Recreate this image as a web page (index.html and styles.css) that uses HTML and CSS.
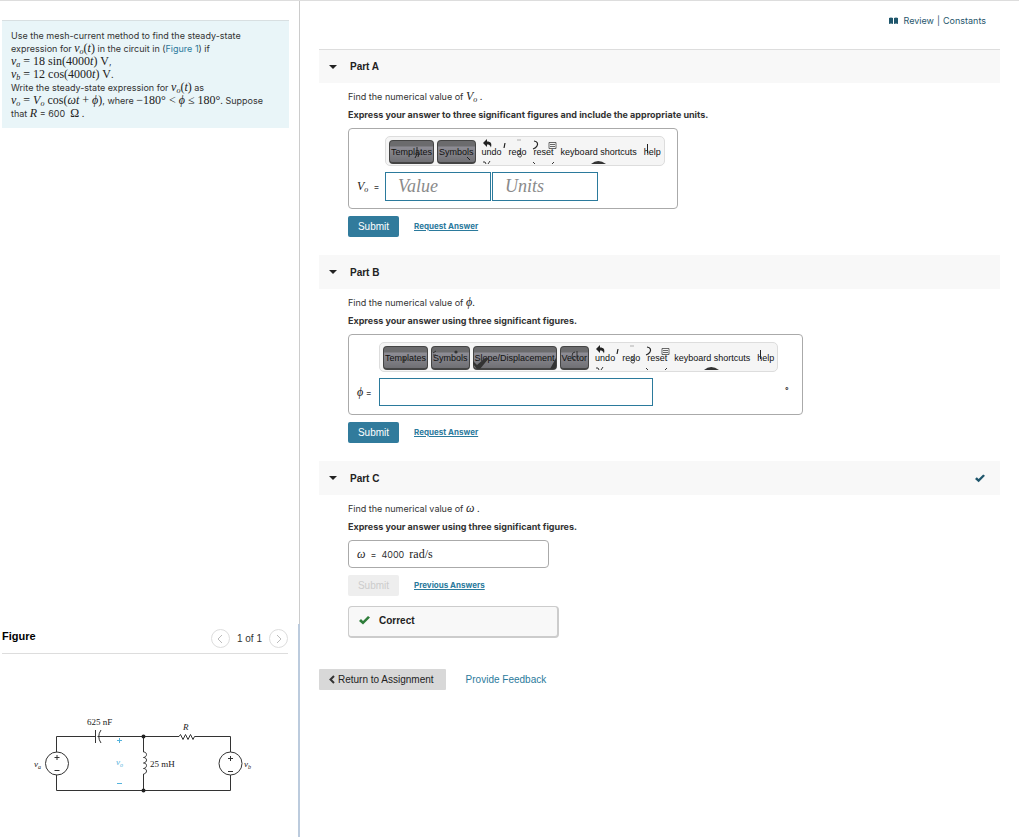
FILE: index.html
```html
<!DOCTYPE html>
<html lang="en">
<head>
<meta charset="utf-8">
<meta name="viewport" content="width=device-width, initial-scale=1">
<title>Mesh-current method</title>
<link rel="stylesheet" href="styles.css">
</head>
<body>
<svg class="defs" aria-hidden="true">
  <symbol id="marks" viewBox="0 0 170 30">
    <path d="M0 6l4-4v2.500c4 0 5 2 4 6-1-2.500-2-3-4-3V10z" fill="#222"/>
    <g fill="none" stroke="#222" stroke-width="1.200">
      <path d="M22 6l-1 5"/>
      <path d="M34 3h4" stroke="#bbb"/>
      <path d="M35 14c3 0 3 2 1 3s-1 3 1 3 2-3 0-3" stroke-width=".8"/>
      <path d="M51 4q5 1 3 5q-1 2-4 3"/>
      <path d="M66 5.500h7v6h-7zM67 7.500h5M67 9.500h5" stroke-width=".8" stroke="#444"/>
      <path d="M0 25l2 0 1 2M5 27l2-3M50 25l2 2M69 27l2-2" stroke-width=".9"/>
      <path d="M164.500 7v9" stroke-width="1"/>
    </g>
    <path d="M108 27q7-6 15 0z" fill="#333"/>
  </symbol>
</svg>
<div class="page">
  <aside class="side">
    <section class="problem">
      Use the mesh-current method to find the steady-state expression for <span class="m"><i>v<sub>o</sub></i>(<i>t</i>)</span> in the circuit in (<a href="#figure">Figure 1</a>) if<br>
      <span class="m"><i>v<sub>a</sub></i> = 18 sin(4000<i>t</i>) V</span>,<br>
      <span class="m"><i>v<sub>b</sub></i> = 12 cos(4000<i>t</i>) V</span>.<br>
      Write the steady-state expression for <span class="m"><i>v<sub>o</sub></i>(<i>t</i>)</span> as<br>
      <span class="m"><i>v<sub>o</sub></i> = <i>V<sub>o</sub></i> cos(<i>ωt</i> + <i>ϕ</i>)</span>, where <span class="m">−180° &lt; <i>ϕ</i> ≤ 180°</span>. Suppose<br>
      that <i class="m">R</i> = 600 &nbsp;<span class="m">Ω</span> .
    </section>
    <section class="figure" id="figure">
      <header class="figure-head">
        <h2>Figure</h2>
        <nav class="pager">
          <button type="button" aria-label="Previous figure"><svg width="6" height="10" viewBox="0 0 6 10"><path d="M5 1L1 5l4 4"/></svg></button>
          <span>1 of 1</span>
          <button type="button" aria-label="Next figure"><svg width="6" height="10" viewBox="0 0 6 10"><path d="M1 1l4 4-4 4"/></svg></button>
        </nav>
      </header>
      <svg class="circuit" width="230" height="100" viewBox="30 705 230 100" role="img" aria-label="Circuit">
        <g fill="none" stroke="#333" stroke-width="1">
          <path d="M56.500 752V736.500H95.500M98.500 736.500H143.500V752M143.500 736.500H179l1.500-2 2.500 5 2.500-5 2.500 5 2.500-5 2.500 5 1.500-3H230.500V752M230.500 775V790.500H56.500V775"/>
          <path d="M95.500 730v13M101 730q-4.500 6.500 0 13M97.500 736.500h3"/>
          <path d="M143.500 752c4 0 4 5 0 5.500c4 0 4 5 0 5.500c4 0 4 5 0 5.500c4 0 4 5 0 5.500V790.500"/>
          <circle cx="57" cy="763.500" r="11.500"/>
          <circle cx="230.500" cy="763.500" r="11.500"/>
          <path d="M54.500 757.500h5M57 755v5M54.500 770.500h5M228 758.500h5M230.500 756v5M228 771.500h5"/>
          <path d="M117 740.500h5M119.500 738v5M117 783.500h5" stroke="#55b3dc"/>
        </g>
        <circle cx="143.500" cy="736.500" r="2"/>
        <circle cx="143.500" cy="790.500" r="2"/>
        <text x="87" y="725">625 nF</text>
        <text x="183" y="730" class="it">R</text>
        <text x="150" y="767">25 mH</text>
        <text x="34" y="767" class="it">v<tspan class="s" dy="2">a</tspan></text>
        <text x="244" y="767" class="it">v<tspan class="s" dy="2">b</tspan></text>
        <text x="116" y="765" class="it blue">v<tspan class="s" dy="2">o</tspan></text>
      </svg>
    </section>
  </aside>

  <main class="main">
    <nav class="tools">
      <svg width="9" height="8" viewBox="0 0 9 8" aria-hidden="true"><path d="M0 1q2-1 4 0v6q-2-1-4 0zM5 1q2-1 4 0v6q-2-1-4 0z" fill="#1f566c"/></svg>
      <a href="#review">Review</a><span>|</span><a href="#constants">Constants</a>
    </nav>

    <section class="part">
      <h2 class="part-head first"><button type="button">Part A</button></h2>
      <div class="part-body">
        <p>Find the numerical value of <i class="m">V<sub>o</sub></i> .</p>
        <p class="ask">Express your answer to three significant figures and include the appropriate units.</p>
        <div class="answer answer-a">
          <div class="toolbar">
            <button type="button" class="key">Templates</button><button type="button" class="key">Symbols</button>
            <div class="plain"><button type="button">undo</button><button type="button">redo</button><button type="button">reset</button><button type="button">keyboard shortcuts</button><button type="button">help</button></div>
            <svg class="overlay" width="280" height="30" aria-hidden="true">
              <use href="#marks" x="97" y="0" width="170" height="30"/>
              <path d="M31 10v7l-2 4M33 16l-1 4M81 20l3 3" fill="none" stroke="#222"/>
            </svg>
          </div>
          <label for="value"><i class="m">V<sub>o</sub></i>&nbsp; =</label>
          <div class="fields"><input id="value" placeholder="Value"><input placeholder="Units" aria-label="Units"></div>
        </div>
        <div class="actions"><button type="button" class="submit">Submit</button><a href="#request-a">Request Answer</a></div>
      </div>
    </section>

    <section class="part">
      <h2 class="part-head"><button type="button">Part B</button></h2>
      <div class="part-body">
        <p>Find the numerical value of <i class="m">ϕ</i>.</p>
        <p class="ask">Express your answer using three significant figures.</p>
        <div class="answer answer-b">
          <div class="toolbar">
            <button type="button" class="key">Templates</button><button type="button" class="key">Symbols</button><button type="button" class="key">Slope/Displacement</button><button type="button" class="key">Vector</button>
            <div class="plain"><button type="button">undo</button><button type="button">redo</button><button type="button">reset</button><button type="button">keyboard shortcuts</button><button type="button">help</button></div>
            <svg class="overlay" width="399" height="30" aria-hidden="true">
              <use href="#marks" x="216" y="0" width="170" height="30"/>
              <path d="M24 13v7M23 17h3M53 10l3-2M53 12h3M195 9q-3 0-3 4t3 4M197 8v8" fill="none" stroke="#333"/>
              <circle cx="76" cy="9" r="1.600" fill="#333"/>
              <path d="M93 18l4 4 8-7 4 0-9 11h-3l-4-5zM170 26l6-11v9q0 2-2 2z" fill="#333"/>
            </svg>
          </div>
          <label for="phi"><i class="m">ϕ</i> =</label>
          <div class="fields"><input id="phi"></div>
          <span class="unit">∘</span>
        </div>
        <div class="actions"><button type="button" class="submit">Submit</button><a href="#request-b">Request Answer</a></div>
      </div>
    </section>

    <section class="part">
      <h2 class="part-head"><button type="button">Part C</button><svg width="10" height="9" viewBox="0 0 11 9" aria-hidden="true"><path d="M0 5l2-2 2 2 5-5 2 1.500-7 7z" fill="#1f566c"/></svg></h2>
      <div class="part-body">
        <p>Find the numerical value of <i class="m">ω</i> .</p>
        <p class="ask">Express your answer using three significant figures.</p>
        <div class="result"><i class="m">ω</i> <span>=</span> <span>4000</span> <span class="m">rad/s</span></div>
        <div class="actions"><button type="button" class="submit" disabled>Submit</button><a href="#previous">Previous Answers</a></div>
        <div class="correct"><svg width="11" height="9" viewBox="0 0 11 9" aria-hidden="true"><path d="M0 5l2-2 2 2 5-5 2 1.500-7 7z" fill="#2e7d3a"/></svg>Correct</div>
      </div>
    </section>

    <footer class="foot">
      <button type="button"><svg width="6" height="9" viewBox="0 0 6 9" aria-hidden="true"><path d="M5 1L1.500 4.500 5 8" fill="none" stroke="#333" stroke-width="2"/></svg>Return to Assignment</button>
      <a href="#feedback">Provide Feedback</a>
    </footer>
  </main>
</div>
</body>
</html>
```

FILE: styles.css
```css
* { box-sizing: border-box; }
body {
  margin: 0;
  color: #333;
  background: #fff;
  font: 9px/13px Inter, "Liberation Sans", sans-serif;
}
button, input { font: inherit; color: inherit; margin: 0; }
button { border: 0; background: none; padding: 0; cursor: pointer; white-space: nowrap; }
a { color: #2b7a9c; text-decoration: none; }
h2, p { margin: 0; }
.defs { position: absolute; width: 0; height: 0; }
.m { font-family: "Liberation Serif", serif; font-size: 12px; line-height: 1px; color: #222; }
.m sub { font-size: 8px; line-height: 1px; vertical-align: -2px; }

.page {
  display: grid;
  grid-template-columns: 300px minmax(0, 1fr);
  min-height: 100vh;
  margin-right: 5px;
  border-top: 1px solid #ddd;
}
.side { display: flex; flex-direction: column; justify-content: space-between; border-right: 1px solid #ccc; }
.problem {
  margin: 19px 10px 0 2px;
  padding: 8px 9px;
  border-top: 1px solid #d8dfe1;
  background: #e9f5f8;
}
.figure { height: 213px; margin-right: -1px; border-right: 2px solid #bccbdd; padding: 2px 10px 0 2px; }
.figure-head { display: flex; justify-content: space-between; align-items: center; height: 28px; border-bottom: 1px solid #ddd; }
.figure-head h2 { font: bold 11px/14px "Liberation Sans", sans-serif; color: #000; padding-bottom: 8px; }
.pager { display: flex; align-items: center; gap: 7px; padding-bottom: 2px; font: 10px/13px "Liberation Sans", sans-serif; }
.pager button { display: grid; place-items: center; width: 19px; height: 19px; border: 1px solid #ddd; border-radius: 50%; }
.pager path { fill: none; stroke: #bbb; }
.circuit { display: block; margin: 51px 0 0 28px; font: 9px "Liberation Serif", serif; fill: #222; }
.it { font-style: italic; }
.s { font-size: 6px; }
.blue { fill: #55b3dc; }

.main { padding: 13px 19px 20px; }
.tools { display: flex; align-items: center; justify-content: flex-end; gap: 3px; padding-right: 14px; color: #1f566c; }
.tools a { color: inherit; }
.tools svg { margin-right: 3px; }

.part-head { display: flex; align-items: center; justify-content: space-between; height: 34px; padding: 0 15px 0 10px; background: #f8f8f8; font: bold 10px/13px "Liberation Sans", sans-serif; color: #222; }
.part-head.first { margin-top: 22px; border-top: 1px solid #ddd; }
.part-head button { display: flex; align-items: center; gap: 13px; }
.part-head button::before { content: ""; border: 4px solid transparent; border-top-color: #222; border-bottom: 0; }
.part-body { padding: 7px 0 18px 29px; }
.ask { margin: 5px 0 7px; font-weight: 700; }

.answer { display: grid; align-items: center; width: fit-content; max-width: 100%; gap: 6px; padding: 7px 12px 7px 8px; border: 1px solid #aaa; border-radius: 4px; }
.answer-a { grid-template-columns: 22px auto; }
.answer-b { grid-template-columns: 16px auto auto; padding-bottom: 8px; }
.toolbar { position: relative; grid-column: 2; display: flex; align-items: center; gap: 3px; height: 30px; padding: 1px 3px 0; border: 1px solid #ddd; border-radius: 5px; background: #f5f5f5; color: #111; font-family: "Liberation Sans", sans-serif; }
.key { height: 24px; padding: 2px 1px 0; border: 1px solid #444; border-bottom-width: 2px; border-radius: 4px; background: linear-gradient(#6b6b6d 0 5px, #8e8d95 6px, #707074); }
.plain { display: flex; gap: 7px; margin-left: 3px; padding-top: 1px; }
.overlay { position: absolute; left: 0; top: 0; pointer-events: none; }
.answer label { grid-column: 1; white-space: nowrap; }
.fields { display: flex; gap: 1px; }
.fields input { width: 106px; height: 29px; padding: 0 12px; border: 1px solid #2b7a9c; border-radius: 0; background: #fff; font: italic 18px "Liberation Serif", serif; }
.fields input::placeholder { color: #8a8a8a; opacity: 1; }
.answer-b .fields input { width: 274px; height: 28px; }
.unit { grid-column: 3; align-self: start; font: 9px "Liberation Serif", serif; padding-top: 6px; color: #333; }

.actions { display: flex; align-items: center; gap: 15px; margin-top: 7px; }
.actions a { font-size: 8px; font-weight: 700; text-decoration: underline; }
.submit { width: 51px; height: 21px; border-radius: 2px; background: #317b9c; color: #fff; font: 10px "Liberation Sans", sans-serif; }
.submit:disabled { background: #eee; color: #ccc; }
.result { display: flex; align-items: center; gap: 5px; width: 201px; height: 28px; padding: 0 8px; border: 1px solid #aaa; border-radius: 4px; }
.correct { display: flex; align-items: center; gap: 9px; width: 211px; height: 32px; margin-top: 10px; padding: 0 10px 2px; border: 1px solid #ccc; border-width: 1px 2px 2px 1px; border-radius: 4px; background: #f8f8f8; color: #222; font: bold 10px "Liberation Sans", sans-serif; }

.foot { display: flex; align-items: center; gap: 20px; margin-top: 13px; font: 10px "Liberation Sans", sans-serif; }
.foot button { display: flex; align-items: center; gap: 3px; height: 21px; padding: 0 12px 0 10px; background: #d8d8d8; border-radius: 1px; color: #222; }
```
